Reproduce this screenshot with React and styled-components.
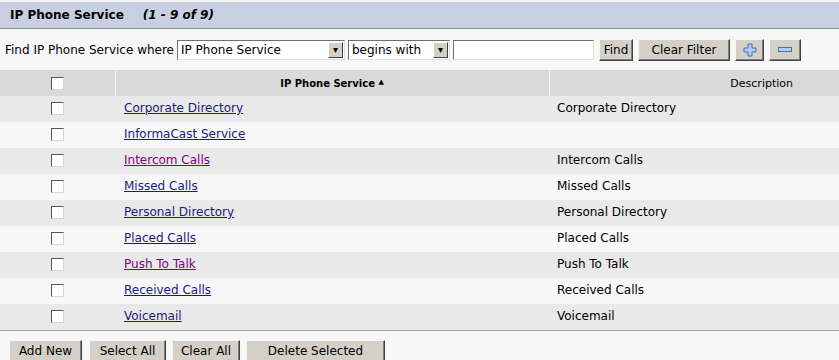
import styled, { createGlobalStyle } from "styled-components";

const GlobalStyle = createGlobalStyle`
  body {
    margin: 0;
    background: #f7f7f7;
    font-family: "DejaVu Sans", Verdana, sans-serif;
    font-size: 12px;
    color: #000;
  }
`;

const services = [
  { name: "Corporate Directory", desc: "Corporate Directory" },
  { name: "InformaCast Service", desc: "" },
  { name: "Intercom Calls", desc: "Intercom Calls", visited: true },
  { name: "Missed Calls", desc: "Missed Calls" },
  { name: "Personal Directory", desc: "Personal Directory" },
  { name: "Placed Calls", desc: "Placed Calls" },
  { name: "Push To Talk", desc: "Push To Talk", visited: true },
  { name: "Received Calls", desc: "Received Calls" },
  { name: "Voicemail", desc: "Voicemail" },
];

const PlusIcon = () => (
  <svg width="14" height="14" viewBox="0 0 14 14">
    <path
      d="M5 1h4v4h4v4h-4v4h-4v-4h-4v-4h4z"
      fill="#b4cdf2"
      stroke="#4a6cb0"
      strokeWidth="1"
    />
  </svg>
);

const MinusIcon = () => (
  <svg width="16" height="8" viewBox="0 0 16 8">
    <rect x="1.5" y="1.5" width="13" height="4" fill="#b4cdf2" stroke="#4a6cb0" strokeWidth="1" />
  </svg>
);

const App = () => {
  return (
    <Page>
      <GlobalStyle />
      <TitleBar>
        IP Phone Service<Count>(1 - 9 of 9)</Count>
      </TitleBar>
      <FilterBar>
        <FilterLabel>Find IP Phone Service where</FilterLabel>
        <FakeSelect $width={168}>
          <span>IP Phone Service</span>
          <DropArrow>▾</DropArrow>
        </FakeSelect>
        <FakeSelect $width={102}>
          <span>begins with</span>
          <DropArrow>▾</DropArrow>
        </FakeSelect>
        <TextBox $width={141} />
        <Button $width={34} $ml={5}>Find</Button>
        <Button $width={92} $ml={5}>Clear Filter</Button>
        <Button $width={29} $ml={5}>
          <PlusIcon />
        </Button>
        <Button $width={32} $ml={5}>
          <MinusIcon />
        </Button>
      </FilterBar>
      <Table>
        <colgroup>
          <col style={{ width: 115 }} />
          <col style={{ width: 434 }} />
          <col />
        </colgroup>
        <thead>
          <tr>
            <HeadCell $align="center">
              <Check />
            </HeadCell>
            <HeadCell $align="center" $bold>
              IP Phone Service <SortArrow>▲</SortArrow>
            </HeadCell>
            <HeadCell $align="right" $pr={46}>
              Description
            </HeadCell>
          </tr>
        </thead>
        <tbody>
          {services.map((s, i) => (
            <Row key={s.name} $dark={i % 2 === 0}>
              <Cell $align="center">
                <Check />
              </Cell>
              <Cell $pl={9}>
                <Link href="#" $visited={s.visited}>
                  {s.name}
                </Link>
              </Cell>
              <Cell $pl={8}>{s.desc}</Cell>
            </Row>
          ))}
        </tbody>
      </Table>
      <Actions>
        <Button $width={73}>Add New</Button>
        <Button $width={77} $ml={7}>Select All</Button>
        <Button $width={68} $ml={6}>Clear All</Button>
        <Button $width={139} $ml={6}>Delete Selected</Button>
      </Actions>
    </Page>
  );
};

export default App;

const Page = styled.div`
  width: 839px;
  height: 360px;
  overflow: hidden;
  padding-top: 2px;
  box-sizing: border-box;
`;

const TitleBar = styled.div`
  height: 26px;
  background: #c8cfe0;
  border-bottom: 1px solid #8e9098;
  display: flex;
  align-items: center;
  padding-left: 10px;
  font-weight: bold;
  font-size: 12px;
`;

const Count = styled.span`
  font-style: italic;
  margin-left: 19px;
`;

const FilterBar = styled.div`
  height: 41px;
  display: flex;
  align-items: center;
  padding-left: 5px;
`;

const FilterLabel = styled.span`
  margin-right: 3px;
`;

const FakeSelect = styled.div`
  width: ${(p) => p.$width}px;
  height: 20px;
  box-sizing: border-box;
  margin-right: 3px;
  background: #fff;
  border: 1px solid;
  border-color: #6f6f6f #e0e0e0 #e0e0e0 #6f6f6f;
  display: flex;
  align-items: center;
  justify-content: space-between;
  padding-left: 3px;
  padding-right: 1px;
`;

const DropArrow = styled.span`
  width: 15px;
  height: 16px;
  background: #d4d0c8;
  border: 1px solid;
  border-color: #fff #404040 #404040 #fff;
  box-sizing: border-box;
  display: flex;
  align-items: center;
  justify-content: center;
  font-size: 10px;
  color: #000;
`;

const TextBox = styled.div`
  width: ${(p) => p.$width}px;
  height: 20px;
  box-sizing: border-box;
  background: #fff;
  border: 1px solid;
  border-color: #6f6f6f #e0e0e0 #e0e0e0 #6f6f6f;
`;

const Button = styled.button`
  width: ${(p) => p.$width}px;
  height: 22px;
  margin-left: ${(p) => p.$ml || 0}px;
  padding: 0;
  background: #d4d0c8;
  border: 1px solid;
  border-color: #f4f4f4 #404040 #404040 #f4f4f4;
  box-shadow: inset -1px -1px 0 #808080;
  font-family: "DejaVu Sans", Verdana, sans-serif;
  font-size: 12px;
  color: #000;
  display: flex;
  align-items: center;
  justify-content: center;
  white-space: nowrap;
`;

const Table = styled.table`
  width: 839px;
  border-collapse: collapse;
  table-layout: fixed;
`;

const HeadCell = styled.th`
  height: 26px;
  padding: 0 ${(p) => p.$pr || 0}px 0 0;
  background: #d9d9d9;
  border-left: 1px solid #f4f4f4;
  text-align: ${(p) => p.$align};
  font-weight: ${(p) => (p.$bold ? "bold" : "normal")};
  font-size: ${(p) => (p.$bold ? 10 : 11)}px;
  vertical-align: middle;
  &:first-child {
    border-left: none;
  }
`;

const SortArrow = styled.span`
  font-size: 7px;
  vertical-align: 3px;
`;

const Row = styled.tr`
  background: ${(p) => (p.$dark ? "#e9e9e9" : "#f7f7f7")};
  &:last-child td {
    border-bottom: 1px solid #a8a8a8;
  }
`;

const Cell = styled.td`
  height: 24px;
  padding: 0 0 2px ${(p) => p.$pl || 0}px;
  text-align: ${(p) => p.$align || "left"};
  vertical-align: middle;
  line-height: 14px;
`;

const Check = styled.span`
  display: inline-block;
  width: 13px;
  height: 13px;
  box-sizing: border-box;
  background: #fff;
  border: 1px solid;
  border-color: #555 #d8d8d8 #d8d8d8 #555;
  vertical-align: middle;
`;

const Link = styled.a`
  color: ${(p) => (p.$visited ? "#800080" : "#1a1a80")};
  text-decoration: underline;
`;

const Actions = styled.div`
  display: flex;
  padding: 9px 0 0 9px;
`;
